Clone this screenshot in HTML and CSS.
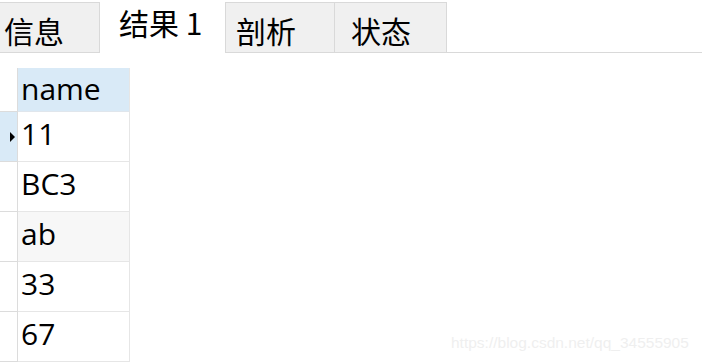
FILE: index.html
```html
<!DOCTYPE html>
<html lang="zh">
<head>
<meta charset="utf-8">
<link rel="stylesheet" href="styles.css">
</head>
<body>
<div class="tabs">
  <div class="tab t-info">信息</div>
  <div class="tab active">结果 1</div>
  <div class="tab t-prof">剖析</div>
  <div class="tab t-stat">状态</div>
  <div class="tab-rest"></div>
</div>
<div class="grid">
  <div class="ind head-ind"></div><div class="cell head">name</div>
  <div class="ind sel"><span class="arrow"></span></div><div class="cell">11</div>
  <div class="ind"></div><div class="cell">BC3</div>
  <div class="ind"></div><div class="cell alt">ab</div>
  <div class="ind"></div><div class="cell">33</div>
  <div class="ind"></div><div class="cell">67</div>
</div>
<div class="watermark">https://blog.csdn.net/qq_34555905</div>
</body>
</html>
```
FILE: styles.css
```css
html, body {
  margin: 0;
  background: #ffffff;
  width: 702px;
  height: 363px;
  overflow: hidden;
}
body {
  position: relative;
  font-family: "Open Sans", "Noto Sans CJK SC", sans-serif;
  color: #000;
}
.tabs {
  display: flex;
  height: 53px;
  align-items: flex-end;
}
.tab {
  box-sizing: border-box;
  font-family: "Noto Sans CJK SC", sans-serif;
  font-size: 30px;
  line-height: 1;
  height: 51px;
  background: #f0f0f0;
  border: 1px solid #d9d9d9;
  padding: 12px 0 0 4px;
  white-space: nowrap;
}
.t-info { width: 100px; border-left: none; }
.active {
  width: 125px;
  height: 53px;
  background: #fff;
  border: none;
  padding: 7px 0 0 19px;
}
.t-prof { width: 110px; padding-left: 10px; }
.t-stat { width: 112px; border-left: none; padding-left: 16px; }
.tab-rest {
  flex: 1;
  height: 53px;
  box-sizing: border-box;
  border-bottom: 1px solid #d9d9d9;
}
.grid {
  margin-top: 15px;
  display: grid;
  grid-template-columns: 18px 112px;
  grid-template-rows: 44px repeat(5, 50px);
}
.ind {
  box-sizing: border-box;
  border-right: 1px solid #dcdcdc;
  border-bottom: 1px solid #dcdcdc;
  position: relative;
}
.head-ind { border-bottom: 1px solid #dcdcdc; background: #fff; }
.ind.sel { background: #d9eaf7; }
.arrow {
  position: absolute;
  left: 10px;
  top: 20px;
  width: 0;
  height: 0;
  border-top: 5px solid transparent;
  border-bottom: 5px solid transparent;
  border-left: 5px solid #000;
}
.cell {
  box-sizing: border-box;
  border-right: 1px solid #e6e6e6;
  border-bottom: 1px solid #e6e6e6;
  font-size: 30px;
  line-height: 1;
  padding: 7px 0 0 3px;
}
.cell.head {
  background: #d9eaf7;
  border-bottom: 1px solid #e0e6ec;
  padding-top: 6px;
}
.cell.alt { background: #f7f7f7; }
.watermark {
  position: absolute;
  left: 451px;
  top: 334px;
  font-family: "Liberation Sans", sans-serif;
  font-size: 15.5px;
  color: #efefef;
}
```
